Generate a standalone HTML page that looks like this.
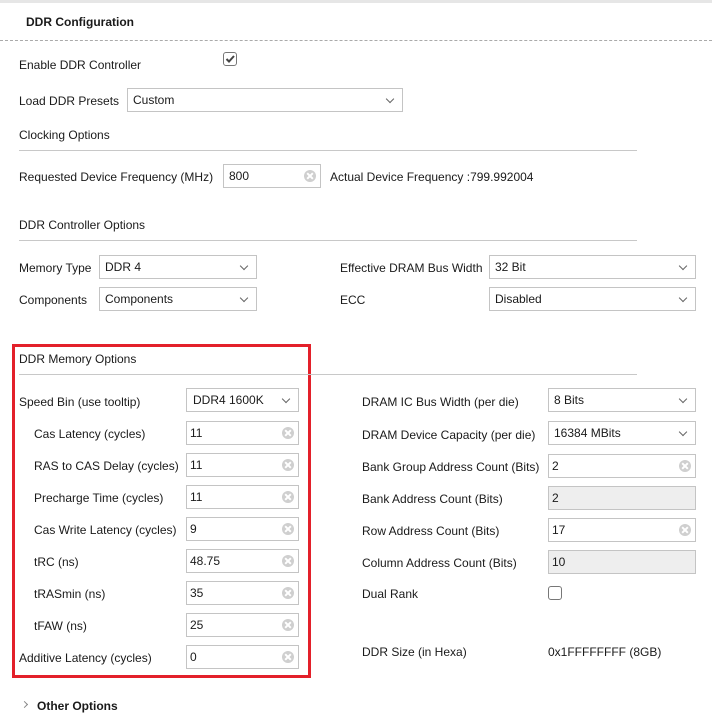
<!DOCTYPE html>
<html><head><meta charset="utf-8"><style>
*{margin:0;padding:0;box-sizing:border-box}
body{width:712px;height:714px;background:#fff;position:relative;overflow:hidden;font-family:"Liberation Sans",Arial,sans-serif;font-size:12px;color:#1a1a1a}
.a{position:absolute;white-space:nowrap;line-height:14px}
.b{font-weight:bold}
.f{position:absolute;border:1px solid #c4c4c4;background:#fff;height:24px;padding-left:5px;line-height:23px}
.g{background:#eeeeee}
.x{position:absolute;right:4px;top:5px;width:12px;height:12px;border-radius:50%;background:#cfcfcf}
.x:before,.x:after{content:"";position:absolute;left:5px;top:2px;width:2px;height:8px;background:#fff;transform:rotate(45deg)}
.x:after{transform:rotate(-45deg)}
.d{position:absolute;right:9px;top:7px;width:6px;height:6px;border-right:1.5px solid #666;border-bottom:1.5px solid #666;transform:rotate(45deg)}
.l{position:absolute;left:19px;width:618px;height:1px;background:#c8c8c8}
.cb{position:absolute;width:14px;height:14px;border:1px solid #777;border-radius:3px;background:#fff}
</style></head><body>
<div style="position:absolute;left:0;top:0;width:712px;height:3px;background:#e6e6e6"></div>
<div class="a b" style="left:26px;top:15px">DDR Configuration</div>
<div style="position:absolute;left:0;top:40px;width:712px;border-top:1px dashed #aaa"></div>
<div class="a" style="left:19px;top:58px">Enable DDR Controller</div>
<div class="cb" style="left:223px;top:52px"><svg width="12" height="12" style="position:absolute;left:0;top:0"><path d="M2.5 6 L5 8.5 L10 3" stroke="#444" stroke-width="2" fill="none"/></svg></div>
<div class="a" style="left:19px;top:94px">Load DDR Presets</div>
<div class="f" style="left:127px;top:88px;width:276px">Custom<span class="d"></span></div>
<div class="a" style="left:19px;top:128px">Clocking Options</div>
<div class="l" style="top:150px"></div>
<div class="a" style="left:19px;top:170px">Requested Device Frequency (MHz)</div>
<div class="f" style="left:223px;top:164px;width:98px">800<span class="x"></span></div>
<div class="a" style="left:330px;top:170px">Actual Device Frequency :799.992004</div>
<div class="a" style="left:19px;top:218px">DDR Controller Options</div>
<div class="l" style="top:240px"></div>
<div class="a" style="left:19px;top:261px">Memory Type</div>
<div class="f" style="left:99px;top:255px;width:158px">DDR 4<span class="d"></span></div>
<div class="a" style="left:340px;top:261px">Effective DRAM Bus Width</div>
<div class="f" style="left:489px;top:255px;width:207px">32 Bit<span class="d"></span></div>
<div class="a" style="left:19px;top:293px">Components</div>
<div class="f" style="left:99px;top:287px;width:158px">Components<span class="d"></span></div>
<div class="a" style="left:340px;top:293px">ECC</div>
<div class="f" style="left:489px;top:287px;width:207px">Disabled<span class="d"></span></div>

<div style="position:absolute;left:12px;top:344px;width:299px;height:334px;border:3px solid #e3202a"></div>
<div class="a" style="left:19px;top:352px">DDR Memory Options</div>
<div class="l" style="top:374px"></div>
<div class="a" style="left:19px;top:395px">Speed Bin (use tooltip)</div>
<div class="f" style="left:186px;top:388px;width:113px;padding-left:6px">DDR4 1600K<span class="d"></span></div>

<div class="a" style="left:34px;top:427px">Cas Latency (cycles)</div>
<div class="f" style="left:186px;top:421px;width:113px;padding-left:3px">11<span class="x"></span></div>
<div class="a" style="left:34px;top:459px">RAS to CAS Delay (cycles)</div>
<div class="f" style="left:186px;top:453px;width:113px;padding-left:3px">11<span class="x"></span></div>
<div class="a" style="left:34px;top:491px">Precharge Time (cycles)</div>
<div class="f" style="left:186px;top:485px;width:113px;padding-left:3px">11<span class="x"></span></div>
<div class="a" style="left:34px;top:523px">Cas Write Latency (cycles)</div>
<div class="f" style="left:186px;top:517px;width:113px;padding-left:3px">9<span class="x"></span></div>
<div class="a" style="left:34px;top:555px">tRC (ns)</div>
<div class="f" style="left:186px;top:549px;width:113px;padding-left:3px">48.75<span class="x"></span></div>
<div class="a" style="left:34px;top:587px">tRASmin (ns)</div>
<div class="f" style="left:186px;top:581px;width:113px;padding-left:3px">35<span class="x"></span></div>
<div class="a" style="left:34px;top:619px">tFAW (ns)</div>
<div class="f" style="left:186px;top:613px;width:113px;padding-left:3px">25<span class="x"></span></div>
<div class="a" style="left:19px;top:651px">Additive Latency (cycles)</div>
<div class="f" style="left:186px;top:645px;width:113px;padding-left:3px">0<span class="x"></span></div>

<div class="a" style="left:362px;top:395px">DRAM IC Bus Width (per die)</div>
<div class="f" style="left:548px;top:388px;width:148px">8 Bits<span class="d"></span></div>
<div class="a" style="left:362px;top:428px">DRAM Device Capacity (per die)</div>
<div class="f" style="left:548px;top:421px;width:148px">16384 MBits<span class="d"></span></div>
<div class="a" style="left:362px;top:460px">Bank Group Address Count (Bits)</div>
<div class="f" style="left:548px;top:454px;width:148px;padding-left:3px">2<span class="x"></span></div>
<div class="a" style="left:362px;top:492px">Bank Address Count (Bits)</div>
<div class="f g" style="left:548px;top:486px;width:148px;padding-left:3px">2</div>
<div class="a" style="left:362px;top:524px">Row Address Count (Bits)</div>
<div class="f" style="left:548px;top:518px;width:148px;padding-left:3px">17<span class="x"></span></div>
<div class="a" style="left:362px;top:556px">Column Address Count (Bits)</div>
<div class="f g" style="left:548px;top:550px;width:148px;padding-left:3px">10</div>
<div class="a" style="left:362px;top:587px">Dual Rank</div>
<div class="cb" style="left:548px;top:586px"></div>
<div class="a" style="left:362px;top:645px">DDR Size (in Hexa)</div>
<div class="a" style="left:548px;top:645px">0x1FFFFFFFF (8GB)</div>

<div style="position:absolute;left:22px;top:702px;width:5px;height:5px;border-right:1px solid #888;border-top:1px solid #888;transform:rotate(45deg)"></div>
<div class="a b" style="left:37px;top:699px">Other Options</div>
</body></html>
